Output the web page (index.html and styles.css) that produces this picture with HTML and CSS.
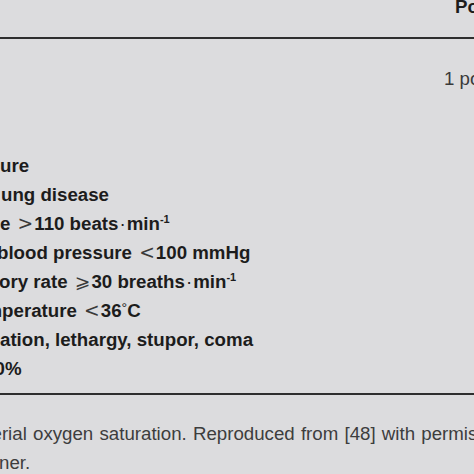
FILE: index.html
```html
<!DOCTYPE html>
<html>
<head>
<meta charset="utf-8">
<link rel="stylesheet" href="styles.css">
</head>
<body>
<div class="page">
  <div class="head">
    <div class="head-label"></div>
    <div class="head-points">Points</div>
  </div>
  <div class="rows">
    <div class="row"><div class="label"></div><div class="points">1 point</div></div>
    <div class="row"><div class="label"></div><div class="points"></div></div>
    <div class="row"><div class="label"></div><div class="points"></div></div>
    <div class="row"><div class="label">ure</div></div>
    <div class="row"><div class="label cut-l">ung disease</div></div>
    <div class="row"><div class="label">e <span class="rel">&gt;</span>110 beats<span class="dot">·</span>min<sup class="sup">-1</sup></div></div>
    <div class="row"><div class="label cut-b">blood pressure <span class="rel">&lt;</span>100 mmHg</div></div>
    <div class="row"><div class="label cut-o">ory rate <span class="rel ge">⩾</span>30 breaths<span class="dot">·</span>min<sup class="sup">-1</sup></div></div>
    <div class="row"><div class="label cut-m">mperature <span class="rel">&lt;</span>36<span class="deg">°</span>C</div></div>
    <div class="row"><div class="label">ation, lethargy, stupor, coma</div></div>
    <div class="row"><div class="label cut-0">0%</div></div>
  </div>
  <div class="caption">
    <div class="cap-line cut-e">erial oxygen saturation. Reproduced from [48] with permission</div>
    <div class="cap-line cut-n">ner.</div>
  </div>
</div>
</body>
</html>
```

FILE: styles.css
```css
html, body {
  margin: 0;
  padding: 0;
}
body {
  background: #dcdcde;
  width: 474px;
  height: 474px;
  overflow: hidden;
  font-family: "Liberation Sans", Arial, sans-serif;
  font-size: 18.7px;
  color: #1c1c1c;
}
.page {
  width: 474px;
  overflow: hidden;
}
.head {
  display: flex;
  height: 37px;
  border-bottom: 2px solid #2e2e2e;
  line-height: 14px;
  font-weight: bold;
  white-space: nowrap;
}
.head-label {
  width: 455px;
  flex: none;
}
.head-points {
  flex: none;
}
.rows {
  padding-top: 25px;
  padding-bottom: 10px;
  border-bottom: 2px solid #2e2e2e;
}
.row {
  display: flex;
  height: 29px;
  line-height: 29px;
  white-space: nowrap;
}
.label {
  width: 444px;
  flex: none;
  font-weight: bold;
  color: #1c1c1c;
}
.points {
  flex: none;
  font-weight: normal;
  color: #3a3a3a;
}
.rel {
  font-weight: normal;
  font-family: "DejaVu Sans", "Liberation Sans", sans-serif;
  color: #3a3a3a;
  margin: 0 1px 0 2px;
}
.dot {
  font-weight: normal;
  margin: 0 1px;
}
.sup {
  font-size: 11px;
  line-height: 0;
  vertical-align: 7px;
  font-weight: bold;
}
.deg {
  font-weight: normal;
  font-size: 14px;
  vertical-align: 4px;
  line-height: 0;
}
.cut-l { margin-left: 1px; }
.cut-b { margin-left: -3px; }
.cut-o { margin-left: -1px; }
.cut-m { margin-left: -14.5px; }
.cut-0 { margin-left: -5.5px; }
.caption {
  margin-top: 24px;
  line-height: 29px;
  color: #3d3d3d;
  white-space: nowrap;
}
.cap-line {
  word-spacing: 1px;
}
.cut-e { margin-left: -8.5px; }
.cut-n { margin-left: -1px; }
```
